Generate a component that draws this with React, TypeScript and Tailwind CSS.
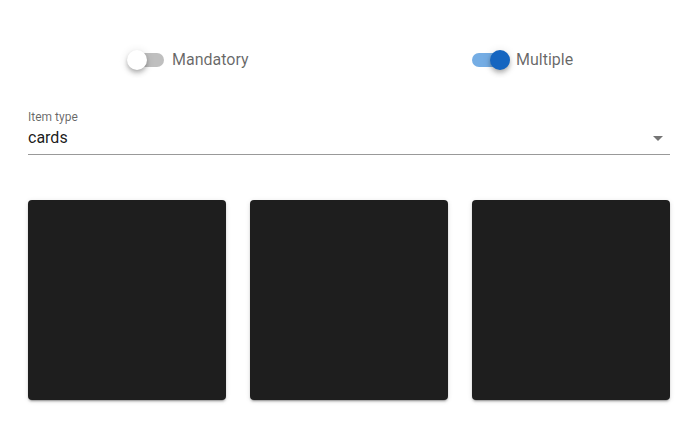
import { useState } from "react";

function Switch({
  label,
  on,
  onToggle,
}: {
  label: string;
  on: boolean;
  onToggle: () => void;
}) {
  return (
    <button type="button" onClick={onToggle} className="flex h-6 items-center">
      <span className="relative mr-2 flex h-5 w-9 items-center">
        <span
          className={`h-[14px] w-9 rounded-full ${
            on ? "bg-[#1976d2]/60" : "bg-black/25"
          }`}
        />
        <span
          className={`absolute top-0 h-5 w-5 rounded-full shadow-[0_2px_4px_-1px_rgba(0,0,0,0.2),0_4px_5px_0_rgba(0,0,0,0.14),0_1px_10px_0_rgba(0,0,0,0.12)] ${
            on ? "left-[18px] bg-[#1565c0]" : "-left-px bg-white"
          }`}
        />
      </span>
      <span className="text-base leading-6 text-black/60">{label}</span>
    </button>
  );
}

export default function App() {
  const [mandatory, setMandatory] = useState(false);
  const [multiple, setMultiple] = useState(true);

  return (
    <div
      className="h-[440px] w-[698px] bg-white px-7 pt-[48px]"
      style={{ fontFamily: "Roboto, 'Liberation Sans', sans-serif" }}
    >
      <div className="grid grid-cols-2">
        <div className="flex pl-[100px]">
          <Switch
            label="Mandatory"
            on={mandatory}
            onToggle={() => setMandatory(!mandatory)}
          />
        </div>
        <div className="flex pl-[123px]">
          <Switch
            label="Multiple"
            on={multiple}
            onToggle={() => setMultiple(!multiple)}
          />
        </div>
      </div>

      <div className="mt-[38px] border-b border-black/40">
        <p className="text-xs leading-[14px] text-black/60">Item type</p>
        <div className="flex items-center justify-between pb-[4px] pt-[2px]">
          <span className="text-base leading-5 text-black/90">cards</span>
          <svg width="24" height="24" viewBox="0 0 24 24">
            <path d="M7 10l5 5 5-5z" fill="rgba(0,0,0,0.54)" />
          </svg>
        </div>
      </div>

      <div className="mt-[45px] grid grid-cols-3 gap-6">
        {[0, 1, 2].map((i) => (
          <div
            key={i}
            className="h-[200px] rounded bg-[#1e1e1e] shadow-[0_3px_1px_-2px_rgba(0,0,0,0.2),0_2px_2px_0_rgba(0,0,0,0.14),0_1px_5px_0_rgba(0,0,0,0.12)]"
          />
        ))}
      </div>
    </div>
  );
}
